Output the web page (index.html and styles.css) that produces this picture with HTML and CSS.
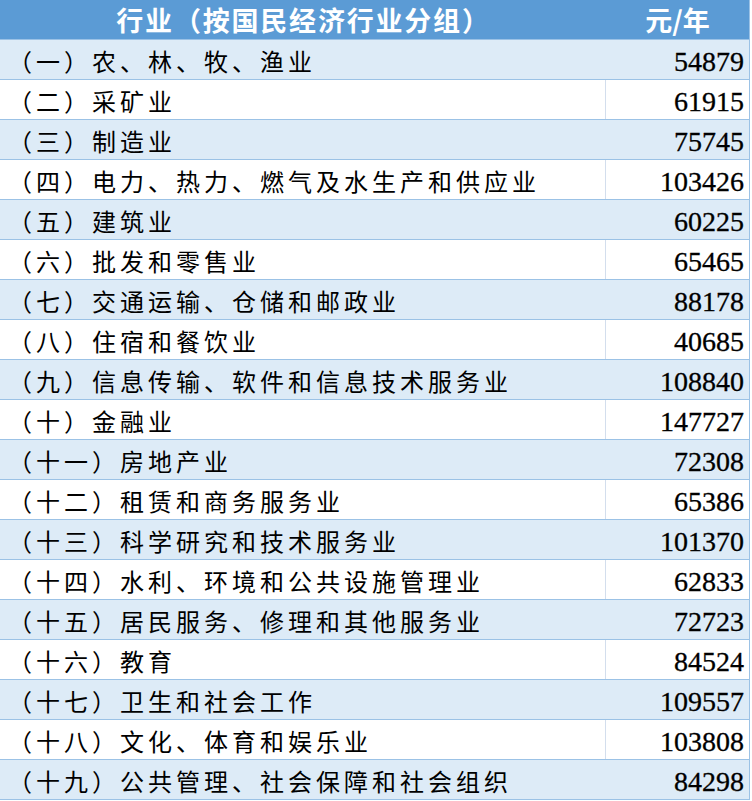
FILE: index.html
```html
<!DOCTYPE html>
<html lang="zh-CN">
<head>
<meta charset="utf-8">
<title>行业平均工资</title>
<link rel="stylesheet" href="styles.css">
</head>
<body>
<div class="sheet">
  <div class="row head">
    <div class="name">行业（按国民经济行业分组）</div>
    <div class="val">元/年</div>
  </div>
  <div class="row band"><div class="name">（一）农、林、牧、渔业</div><div class="val">54879</div></div>
  <div class="row plain"><div class="name">（二）采矿业</div><div class="val">61915</div></div>
  <div class="row band"><div class="name">（三）制造业</div><div class="val">75745</div></div>
  <div class="row plain"><div class="name">（四）电力、热力、燃气及水生产和供应业</div><div class="val">103426</div></div>
  <div class="row band"><div class="name">（五）建筑业</div><div class="val">60225</div></div>
  <div class="row plain"><div class="name">（六）批发和零售业</div><div class="val">65465</div></div>
  <div class="row band"><div class="name">（七）交通运输、仓储和邮政业</div><div class="val">88178</div></div>
  <div class="row plain"><div class="name">（八）住宿和餐饮业</div><div class="val">40685</div></div>
  <div class="row band"><div class="name">（九）信息传输、软件和信息技术服务业</div><div class="val">108840</div></div>
  <div class="row plain"><div class="name">（十）金融业</div><div class="val">147727</div></div>
  <div class="row band"><div class="name">（十一）房地产业</div><div class="val">72308</div></div>
  <div class="row plain"><div class="name">（十二）租赁和商务服务业</div><div class="val">65386</div></div>
  <div class="row band"><div class="name">（十三）科学研究和技术服务业</div><div class="val">101370</div></div>
  <div class="row plain"><div class="name">（十四）水利、环境和公共设施管理业</div><div class="val">62833</div></div>
  <div class="row band"><div class="name">（十五）居民服务、修理和其他服务业</div><div class="val">72723</div></div>
  <div class="row plain"><div class="name">（十六）教育</div><div class="val">84524</div></div>
  <div class="row band"><div class="name">（十七）卫生和社会工作</div><div class="val">109557</div></div>
  <div class="row plain"><div class="name">（十八）文化、体育和娱乐业</div><div class="val">103808</div></div>
  <div class="row band"><div class="name">（十九）公共管理、社会保障和社会组织</div><div class="val">84298</div></div>
</div>
</body>
</html>
```
FILE: styles.css
```css
html, body {
  margin: 0;
  padding: 0;
  background: #ffffff;
}

.sheet {
  width: 749px;
  border-right: 1px solid #9bc2e6;
  display: flex;
  flex-direction: column;
}

.row {
  display: flex;
  height: 39px;
  border-bottom: 1px solid #9bc2e6;
  color: #000;
}

.name {
  width: 605px;
  box-sizing: border-box;
  padding: 3px 0 0 8px;
  font-family: "Noto Sans CJK SC", sans-serif;
  font-size: 24px;
  letter-spacing: 4px;
  line-height: 36px;
  white-space: nowrap;
  overflow: hidden;
}

.val {
  flex: 1;
  box-sizing: border-box;
  border-left: 1px solid transparent;
  padding: 3px 5px 0 0;
  text-align: right;
  font-family: "Liberation Serif", "Times New Roman", serif;
  font-size: 28px;
  line-height: 38px;
  -webkit-text-stroke: 0.3px #000;
  white-space: nowrap;
}

.band {
  background: #ddebf7;
}

.plain {
  background: #ffffff;
}

.plain .val {
  border-left-color: #d3deed;
}

.head {
  background: #5b9bd5;
  color: #ffffff;
}

.head .name,
.head .val {
  padding: 1px 0 0 0;
  text-align: center;
  font-family: "Noto Sans CJK SC", sans-serif;
  font-weight: 700;
  font-size: 27px;
  line-height: 38px;
  -webkit-text-stroke: 0;
}

.head .name {
  letter-spacing: 1.8px;
  padding-left: 2px;
}

.head .val {
  letter-spacing: 0;
  padding-right: 0;
  border-left-color: transparent;
}
```
